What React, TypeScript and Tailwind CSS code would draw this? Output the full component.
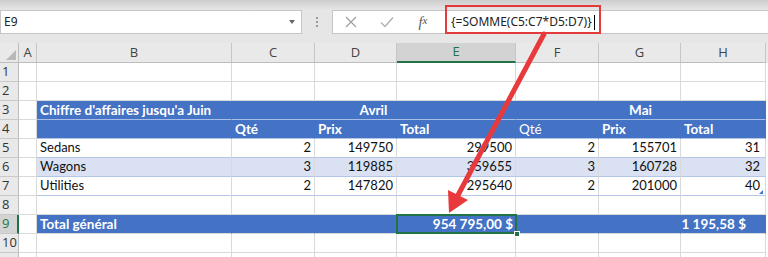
import clsx from "clsx";
import type { ReactNode } from "react";

const GRID = "border-r border-b border-[#dadada]";
const BLUE = "bg-[#4472c4] text-white font-bold text-[13.5px] border-r-[#4472c4]";

const cols = [
  { name: "A", w: "w-[18px]" },
  { name: "B", w: "w-[195px]" },
  { name: "C", w: "w-[83px]" },
  { name: "D", w: "w-[82px]" },
  { name: "E", w: "w-[119px]" },
  { name: "F", w: "w-[83px]" },
  { name: "G", w: "w-[82px]" },
  { name: "H", w: "w-[85px]" },
];

const Cell = ({ w, className, children }: { w: string; className?: string; children?: ReactNode }) => (
  <div
    className={clsx(
      "h-full shrink-0 flex items-center px-[3px] overflow-hidden whitespace-nowrap",
      GRID,
      w,
      className
    )}
  >
    {children}
  </div>
);

const Row = ({ n, active, children }: { n?: number; active?: boolean; children?: ReactNode }) => (
  <div className="flex h-[19px] bg-white">
    <div
      className={clsx(
        "w-[19px] h-full shrink-0 border-b border-[#c9c9c9] pl-[2px] flex items-center text-[13px] font-['Open_Sans',sans-serif]",
        active
          ? "bg-[#d3d3d3] text-[#217346] border-r-2 border-r-[#217346]"
          : "bg-[#e9e9e9] text-[#333] border-r border-r-[#bdbdbd]"
      )}
    >
      {n}
    </div>
    {children}
  </div>
);

const EmptyRow = ({ n }: { n?: number }) => (
  <Row n={n}>
    {cols.map((c) => (
      <Cell key={c.name} w={c.w} />
    ))}
  </Row>
);

type Line = { label: string; q1: number; p1: number; t1: number; q2: number; p2: number; t2: string };

const lines: Line[] = [
  { label: "Sedans", q1: 2, p1: 149750, t1: 299500, q2: 2, p2: 155701, t2: "31" },
  { label: "Wagons", q1: 3, p1: 119885, t1: 359655, q2: 3, p2: 160728, t2: "32" },
  { label: "Utilities", q1: 2, p1: 147820, t1: 295640, q2: 2, p2: 201000, t2: "40" },
];

const FormulaBar = () => (
  <div className="flex h-[24px] items-stretch">
    <div className="w-[302px] bg-white border border-[#c6c6c6] flex items-center justify-between pl-[3px] pr-[6px] text-[12px] text-[#222] font-['Noto_Sans',sans-serif]">
      <span>E9</span>
      <svg width="6" height="4" viewBox="0 0 6 4">
        <polygon points="0,0 6,0 3,4" fill="#666" />
      </svg>
    </div>
    <div className="w-[30px] flex flex-col items-center justify-center gap-[2px]">
      <span className="w-[2px] h-[2px] bg-[#9a9a9a]" />
      <span className="w-[2px] h-[2px] bg-[#9a9a9a]" />
      <span className="w-[2px] h-[2px] bg-[#9a9a9a]" />
    </div>
    <div className="flex-1 bg-white border-y border-l border-[#c6c6c6] flex items-center">
      <div className="w-[36px] flex justify-center">
        <svg width="12" height="12" viewBox="0 0 12 12">
          <path d="M1 1L11 11M11 1L1 11" stroke="#9e9e9e" strokeWidth="1.2" />
        </svg>
      </div>
      <div className="w-[36px] flex justify-center">
        <svg width="14" height="12" viewBox="0 0 14 12">
          <path d="M1 6.5L5 10.5L13 1.5" stroke="#b0b0b0" strokeWidth="1.4" fill="none" />
        </svg>
      </div>
      <div className="w-[36px] flex justify-center font-['Liberation_Serif',serif] italic text-[14px] text-[#555]">
        f<span className="text-[11px]">x</span>
      </div>
      <div className="pl-[10px] flex items-center text-[12px] text-[#222] font-['Noto_Sans',sans-serif]">
        <span>{"{=SOMME(C5:C7*D5:D7)}"}</span>
        <span className="w-px h-[15px] bg-black ml-[2px]" />
      </div>
    </div>
  </div>
);

const ColumnHeaders = () => (
  <div className="flex h-[20px] bg-[#e9e9e9] font-['Open_Sans',sans-serif] text-[13px] text-[#444]">
    <div className="w-[19px] shrink-0 border-r border-b border-[#bdbdbd] flex items-end justify-end p-[2px]">
      <svg width="10" height="10" viewBox="0 0 10 10">
        <polygon points="10,0 10,10 0,10" fill="#b9b9b9" />
      </svg>
    </div>
    {cols.map((c) => (
      <div
        key={c.name}
        className={clsx(
          "shrink-0 flex items-center justify-center border-r border-[#c6c6c6]",
          c.w,
          c.name === "E"
            ? "bg-[#d3d3d3] text-[#217346] border-b-2 border-b-[#217346]"
            : "border-b border-b-[#bdbdbd]"
        )}
      >
        {c.name}
      </div>
    ))}
  </div>
);

const App = () => {
  return (
    <div className="relative w-[768px] h-[257px] overflow-hidden bg-[#e6e6e6] font-['Lato',sans-serif] text-[13px] text-[#111]">
      <div className="h-[10px] bg-linear-to-b from-[#cdcdcd] to-[#e6e6e6]" />
      <FormulaBar />
      <div className="h-[9px]" />
      <ColumnHeaders />

      <EmptyRow n={1} />
      <EmptyRow n={2} />

      <Row n={3}>
        <Cell w="w-[18px]" />
        <Cell w="w-[195px]" className={clsx(BLUE, "border-b-[#a9bee6]")}>Chiffre d'affaires jusqu'a Juin</Cell>
        <Cell w="w-[284px]" className={clsx(BLUE, "justify-center border-b-[#a9bee6]")}>Avril</Cell>
        <Cell w="w-[250px]" className={clsx(BLUE, "justify-center border-b-[#a9bee6]")}>Mai</Cell>
      </Row>

      <Row n={4}>
        <Cell w="w-[18px]" />
        <Cell w="w-[195px]" className={clsx(BLUE, "border-b-[#b4c6e7]")} />
        <Cell w="w-[83px]" className={clsx(BLUE, "border-b-[#b4c6e7]")}>Qté</Cell>
        <Cell w="w-[82px]" className={clsx(BLUE, "border-b-[#b4c6e7]")}>Prix</Cell>
        <Cell w="w-[119px]" className={clsx(BLUE, "border-b-[#b4c6e7]")}>Total</Cell>
        <Cell w="w-[83px]" className={clsx(BLUE, "border-b-[#b4c6e7] font-normal text-[#c8d6f0]")}>Qté</Cell>
        <Cell w="w-[82px]" className={clsx(BLUE, "border-b-[#b4c6e7]")}>Prix</Cell>
        <Cell w="w-[85px]" className={clsx(BLUE, "border-b-[#b4c6e7]")}>Total</Cell>
      </Row>

      {lines.map((l, i) => {
        const band = clsx("border-b-[#b4c6e7]", i === 1 && "bg-[#d9e1f2]");
        return (
          <Row key={l.label} n={5 + i}>
            <Cell w="w-[18px]" />
            <Cell w="w-[195px]" className={band}>{l.label}</Cell>
            <Cell w="w-[83px]" className={clsx(band, "justify-end")}>{l.q1}</Cell>
            <Cell w="w-[82px]" className={clsx(band, "justify-end")}>{l.p1}</Cell>
            <Cell w="w-[119px]" className={clsx(band, "justify-end")}>{l.t1}</Cell>
            <Cell w="w-[83px]" className={clsx(band, "justify-end")}>{l.q2}</Cell>
            <Cell w="w-[82px]" className={clsx(band, "justify-end")}>{l.p2}</Cell>
            <Cell w="w-[85px]" className={clsx(band, "justify-end relative pr-[5px]")}>
              {l.t2}
              {i === 2 && (
                <span className="absolute right-[2px] bottom-[1px] w-0 h-0 border-l-[4px] border-l-transparent border-b-[4px] border-b-[#4472c4]" />
              )}
            </Cell>
          </Row>
        );
      })}

      <EmptyRow n={8} />

      <Row n={9} active>
        <Cell w="w-[18px]" />
        <Cell w="w-[195px]" className={BLUE}>Total général</Cell>
        <Cell w="w-[83px]" className={BLUE} />
        <Cell w="w-[82px]" className={BLUE} />
        <div className={clsx("relative h-full w-[119px] shrink-0 flex items-center justify-end px-[3px] border-b border-[#dadada]", BLUE)}>
          954 795,00 $
          <span className="absolute -left-px -top-px -right-px -bottom-px border-2 border-[#217346]" />
          <span className="absolute -right-[4px] -bottom-[4px] w-[6px] h-[6px] bg-[#217346] border border-white" />
        </div>
        <Cell w="w-[83px]" className={BLUE} />
        <Cell w="w-[82px]" className={BLUE} />
        <Cell w="w-[85px]" className={clsx(BLUE, "justify-end pr-[19px]")}>1 195,58 $</Cell>
      </Row>

      <EmptyRow n={10} />
      <EmptyRow />

      {/* annotation */}
      <div className="absolute left-[445px] top-[5px] w-[156px] h-[29px] border-2 border-[#e53a3a]" />
      <svg className="absolute left-0 top-0 pointer-events-none" width="768" height="257" viewBox="0 0 768 257">
        <line x1="544" y1="34" x2="457" y2="197" stroke="#e8393d" strokeWidth="5" strokeLinecap="round" />
        <polygon points="449,213 468,200 448,190" fill="#e8393d" />
      </svg>
    </div>
  );
};

export default App;
